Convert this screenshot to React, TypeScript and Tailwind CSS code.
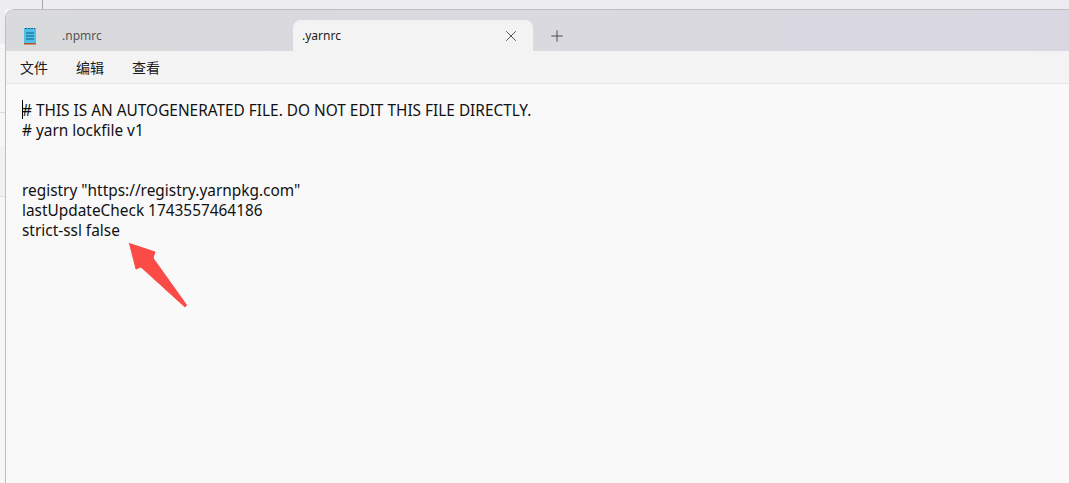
import React from "react";
import { Plus, X } from "lucide-react";

const NotepadIcon = () => (
  <svg width="14" height="18" viewBox="0 0 14 18" className="block">
    <rect x="1" y="1" width="12" height="15" fill="#4fc1e9" />
    <path d="M2 1h2v1H2zM5 1h2v1H5zM8 1h2v1H8zM11 1h1v1h-1z" fill="#0f5f8a" />
    <path d="M3 6h8M3 9h8M3 12h8" stroke="#0f5f8a" strokeWidth="1.2" />
    <rect x="1" y="16" width="12" height="1.5" fill="#b5541c" />
  </svg>
);

const lines = [
  "# THIS IS AN AUTOGENERATED FILE. DO NOT EDIT THIS FILE DIRECTLY.",
  "# yarn lockfile v1",
  "\u00a0",
  "\u00a0",
  'registry "https://registry.yarnpkg.com"',
  "lastUpdateCheck 1743557464186",
  "strict-ssl false",
];

export default function App() {
  return (
    <div className="h-[483px] w-[1069px] overflow-hidden bg-[#f6f6f8] font-['Noto_Sans','Noto_Sans_CJK_SC',sans-serif]">
      <div className="flex">
        {/* page behind the window */}
        <div className="flex h-[483px] w-[5px] shrink-0 flex-col">
          <div className="h-[44px] bg-[#ececf1]" />
          <div className="h-[68px]" />
          <div className="h-px bg-[#d8d8dc]" />
          <div className="h-[33px]" />
          <div className="h-[50px] bg-[#f1f1f3]" />
          <div className="h-px bg-[#e2e2e5]" />
        </div>
        <div className="min-w-0 flex-1">
          <div className="flex h-[9px] bg-[#ececf1]">
            <div className="ml-[37px] h-[9px] w-px bg-[#a9a9ad]" />
          </div>
          <div className="flex h-[474px] flex-col overflow-hidden rounded-tl-[9px] border-t border-l border-[#bdbdc2] bg-[#f9f9f9]">
            {/* tab strip */}
            <div className="flex h-[41px] shrink-0 items-end bg-gradient-to-r from-[#d9dadc] to-[#d9d8e2] pl-[1px]">
              <div className="flex h-[41px] w-[40px] items-center justify-center pt-[11px] pl-[5px]">
                <NotepadIcon />
              </div>
              <div className="flex h-[41px] w-[246px] items-center pt-[10px] pl-[15px] text-[12px] text-[#555]">.npmrc</div>
              <div className="flex h-[31px] w-[240px] items-center justify-between rounded-t-[8px] bg-[#f3f3f3] pr-[13px] pl-[9px] text-[12px] text-[#1a1a1a]">
                <span>.yarnrc</span>
                <X size={18} strokeWidth={1.1} className="text-[#333]" />
              </div>
              <div className="flex h-[31px] w-[50px] items-center justify-center pr-[2px]">
                <Plus size={18} strokeWidth={1.1} className="text-[#333]" />
              </div>
            </div>

            {/* menu */}
            <div className="flex h-[33px] shrink-0 items-center gap-[28px] border-b border-[#e6e6e6] bg-[#f3f3f4] pl-[14px] text-[14px] text-[#1a1a1a]">
              <span>文件</span>
              <span>编辑</span>
              <span>查看</span>
            </div>

            {/* editor */}
            <div className="relative flex-1 pt-[17px] pl-[16px] text-[15.4px] leading-[20px] text-[#111]">
              <div className="absolute top-[16px] left-[16px] h-[19px] w-px bg-black" />
              {lines.map((line, i) => (
                <div key={i}>{line}</div>
              ))}
              <svg width="62" height="68" viewBox="0 0 62 68" className="absolute top-[158px] left-[122px]">
                <path d="M1.5 1.5L27 10L25 16L58.500 63L57 65L13 25L8 27Z" fill="#fb4b47" stroke="#fb4b47" strokeLinejoin="round" />
              </svg>
            </div>
          </div>
        </div>
      </div>
    </div>
  );
}
